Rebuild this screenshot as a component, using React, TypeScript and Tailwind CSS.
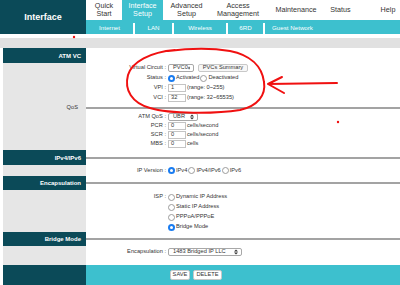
import React from 'react';

const DARK = 'bg-[#0b4a58]';

const Radio: React.FC<{ on?: boolean }> = ({ on }) =>
  on ? (
    <span className="inline-flex h-[7px] w-[7px] items-center justify-center rounded-full bg-[#1a7cf0]">
      <span className="h-[3px] w-[3px] rounded-full bg-white" />
    </span>
  ) : (
    <span className="inline-block h-[7px] w-[7px] rounded-full border border-[#9c9c9c] bg-white" />
  );

const Arrows = () => (
  <svg width="4" height="6" viewBox="0 0 4 6" className="ml-auto">
    <path d="M0 2.4 L2 0.4 L4 2.4Z M0 3.6 L2 5.6 L4 3.6Z" fill="#333" />
  </svg>
);

const Select: React.FC<{ value: string; w: string }> = ({ value, w }) => (
  <div className={`flex h-[8px] items-center rounded-[2px] border border-[#a8a8a8] bg-white pl-[4px] pr-[3px] ${w}`}>
    <span>{value}</span>
    <Arrows />
  </div>
);

const Input: React.FC<{ value: string }> = ({ value }) => (
  <div className="flex h-[8px] w-[18px] items-center border border-[#c4c4c4] bg-white pl-[2px]">{value}</div>
);

const Row: React.FC<{ label?: string; h: string; children?: React.ReactNode }> = ({ label, h, children }) => (
  <div className={`flex ${h}`}>
    <div className="w-[83px] bg-[#e6e6e6]" />
    <div className="flex flex-1 items-center bg-white">
      <div className="w-[82px] pr-[2px] text-right">{label ? `${label} :` : ''}</div>
      <div className="flex items-center gap-[1px]">{children}</div>
    </div>
  </div>
);

const Header: React.FC<{ title: string; h: string; line?: boolean }> = ({ title, h, line = true }) => (
  <div className={`flex ${h}`}>
    <div className={`flex w-[83px] items-center justify-end pr-[5px] text-[6px] font-bold text-white ${DARK}`}>{title}</div>
    <div className="flex flex-1 items-center bg-white">
      {line && <div className="h-[2px] w-full bg-[#a3a3a3]" />}
    </div>
  </div>
);

const Gap: React.FC<{ h: string }> = ({ h }) => (
  <div className={`flex ${h}`}>
    <div className="w-[83px] bg-[#e6e6e6]" />
    <div className="flex-1 bg-white" />
  </div>
);

const tabs = [
  { lines: ['Quick', 'Start'], w: 'w-[36px]' },
  { lines: ['Interface', 'Setup'], w: 'w-[41px]', active: true },
  { lines: ['Advanced', 'Setup'], w: 'w-[47px]' },
  { lines: ['Access', 'Management'], w: 'w-[56px]' },
  { lines: ['Maintenance'], w: 'w-[60px]' },
  { lines: ['Status'], w: 'w-[29px]' },
];

const subs = [
  { name: 'Internet', w: 'w-[47px]' },
  { name: 'LAN', w: 'w-[37px]' },
  { name: 'Wireless', w: 'w-[52px]' },
  { name: '6RD', w: 'w-[35px]' },
  { name: 'Guest Network', w: 'w-[55px]' },
];

export default function App() {
  return (
    <div className="relative h-[285px] w-[400px] overflow-hidden bg-white font-['Liberation_Sans',Arial,sans-serif] text-[5.7px] leading-none text-[#333]">
      {/* top navigation */}
      <div className="flex h-[34px]">
        <div className={`flex w-[86px] items-center justify-center text-[9px] font-bold text-white ${DARK}`}>Interface</div>
        <div className="flex flex-1 flex-col">
          <div className="flex h-[20px] text-[7.2px] leading-[8px] text-[#333]">
            {tabs.map((t) => (
              <div
                key={t.lines.join(' ')}
                className={`flex flex-col items-center justify-center ${t.w} ${t.active ? 'bg-[#3dc0ce] text-white' : ''}`}
              >
                {t.lines.map((l) => (
                  <span key={l}>{l}</span>
                ))}
              </div>
            ))}
            <div className="flex-1" />
            <div className="flex w-[24px] items-center justify-center">Help</div>
          </div>
          <div className="flex h-[14px] bg-[#3dc0ce] text-[6.2px] text-white">
            {subs.map((s, i) => (
              <React.Fragment key={s.name}>
                {i > 0 && <div className="mt-[3px] w-[2px] bg-white" />}
                <div className={`flex items-center justify-center pt-[3px] ${s.w}`}>{s.name}</div>
              </React.Fragment>
            ))}
          </div>
        </div>
      </div>

      <div className="h-[4px]" />
      <div className="h-[10px] bg-[#e1e1e1]" />

      <div className="pl-[3px]">
        <Header title="ATM VC" h="h-[15px]" line={false} />
        <Row label="Virtual Circuit" h="h-[10px]">
          <Select value="PVC0" w="w-[26px]" />
          <div className="ml-[3px] flex h-[8px] w-[50px] items-center justify-center rounded-[2px] border border-[#c8c8c8] bg-[#f7f7f7]">
            PVCs Summary
          </div>
        </Row>
        <Row label="Status" h="h-[10px]">
          <Radio on />
          <span>Activated</span>
          <Radio />
          <span>Deactivated</span>
        </Row>
        <Row label="VPI" h="h-[10px]">
          <Input value="1" />
          <span>(range: 0~255)</span>
        </Row>
        <Row label="VCI" h="h-[10px]">
          <Input value="32" />
          <span>(range: 32~65535)</span>
        </Row>

        <div className="flex h-[9px]">
          <div className="flex w-[83px] items-center justify-end bg-[#e6e6e6] pr-[8px]">QoS</div>
          <div className="flex flex-1 items-center bg-white">
            <div className="h-[2px] w-full bg-[#a3a3a3]" />
          </div>
        </div>
        <Row label="ATM QoS" h="h-[9px]">
          <Select value="UBR" w="w-[30px]" />
        </Row>
        <Row label="PCR" h="h-[9px]">
          <Input value="0" />
          <span>cells/second</span>
        </Row>
        <Row label="SCR" h="h-[9px]">
          <Input value="0" />
          <span>cells/second</span>
        </Row>
        <Row label="MBS" h="h-[9px]">
          <Input value="0" />
          <span>cells</span>
        </Row>
        <Gap h="h-[2px]" />

        <Header title="IPv4/IPv6" h="h-[15px]" />
        <Row label="IP Version" h="h-[11px]">
          <Radio on />
          <span>IPv4</span>
          <Radio />
          <span>IPv4/IPv6</span>
          <Radio />
          <span>IPv6</span>
        </Row>

        <Header title="Encapsulation" h="h-[14px]" />
        <Gap h="h-[2px]" />
        <Row label="ISP" h="h-[10px]">
          <Radio />
          <span>Dynamic IP Address</span>
        </Row>
        <Row h="h-[10px]">
          <Radio />
          <span>Static IP Address</span>
        </Row>
        <Row h="h-[10px]">
          <Radio />
          <span>PPPoA/PPPoE</span>
        </Row>
        <Row h="h-[10px]">
          <Radio on />
          <span>Bridge Mode</span>
        </Row>

        <Header title="Bridge Mode" h="h-[14px]" />
        <Row label="Encapsulation" h="h-[11px]">
          <Select value="1483 Bridged IP LLC" w="w-[74px]" />
        </Row>
        <Gap h="h-[8px]" />

        <div className="flex h-[20px]">
          <div className={`w-[83px] ${DARK}`} />
          <div className="flex flex-1 items-center bg-[#3dc0ce] pl-[84px]">
            <div className="flex h-[10px] w-[20px] items-center justify-center rounded-[2px] border border-[#c8c8c8] bg-white">SAVE</div>
            <div className="ml-[3px] flex h-[10px] w-[29px] items-center justify-center rounded-[2px] border border-[#c8c8c8] bg-white">DELETE</div>
          </div>
        </div>
      </div>

      {/* hand-drawn red annotation */}
      <svg className="pointer-events-none absolute left-0 top-0" width="400" height="285" viewBox="0 0 400 285">
        <g fill="none" stroke="#f01010" strokeWidth="2" strokeLinecap="round" strokeLinejoin="round">
          <path d="M175 50 C150 52 132 62 128 75 C124 90 132 103 150 108 C170 114 215 114 240 110 C258 106 266 95 264 82 C262 66 250 55 230 51 C212 48 192 48 168 51" />
          <path d="M337 83 L268 84 M282 77 L268 84 L284 93" />
        </g>
        <circle cx="74" cy="37" r="1.2" fill="#f01010" />
        <circle cx="338" cy="122" r="1.2" fill="#f01010" />
      </svg>
    </div>
  );
}
